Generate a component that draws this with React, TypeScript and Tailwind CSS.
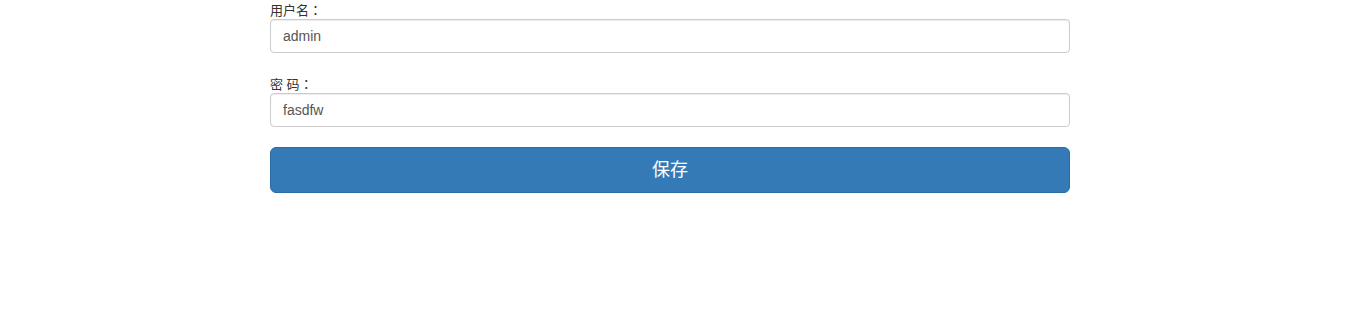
export default function App() {
  return (
    <div
      className="min-h-screen bg-white text-[#333]"
      style={{ fontFamily: '"Liberation Sans", Arial, "Noto Sans CJK SC", sans-serif' }}
    >
      <div className="w-[800px] ml-[270px] flex flex-col">
        {/* USERNAME */}
        <div className="flex flex-col mb-[21px]">
          <label className="text-[13px] leading-[19px] h-[19px]">
            用户名<span className="font-['Noto_Sans_CJK_TC',sans-serif]">：</span>
          </label>
          <input
            defaultValue="admin"
            className="h-[34px] w-full border border-[#ccc] rounded-[4px] px-3 text-[14px] text-[#555] outline-none shadow-[inset_0_1px_1px_rgba(0,0,0,0.075)]"
          />
        </div>

        {/* PASSWORD */}
        <div className="flex flex-col mb-[20px]">
          <label className="text-[13px] leading-[19px] h-[19px]">
            密 码<span className="font-['Noto_Sans_CJK_TC',sans-serif]">：</span>
          </label>
          <input
            defaultValue="fasdfw"
            className="h-[34px] w-full border border-[#ccc] rounded-[4px] px-3 text-[14px] text-[#555] outline-none shadow-[inset_0_1px_1px_rgba(0,0,0,0.075)]"
          />
        </div>

        <button className="h-[46px] w-full bg-[#337ab7] border border-[#2e6da4] rounded-[6px] text-white text-[18px]">
          保存
        </button>
      </div>
    </div>
  );
}
